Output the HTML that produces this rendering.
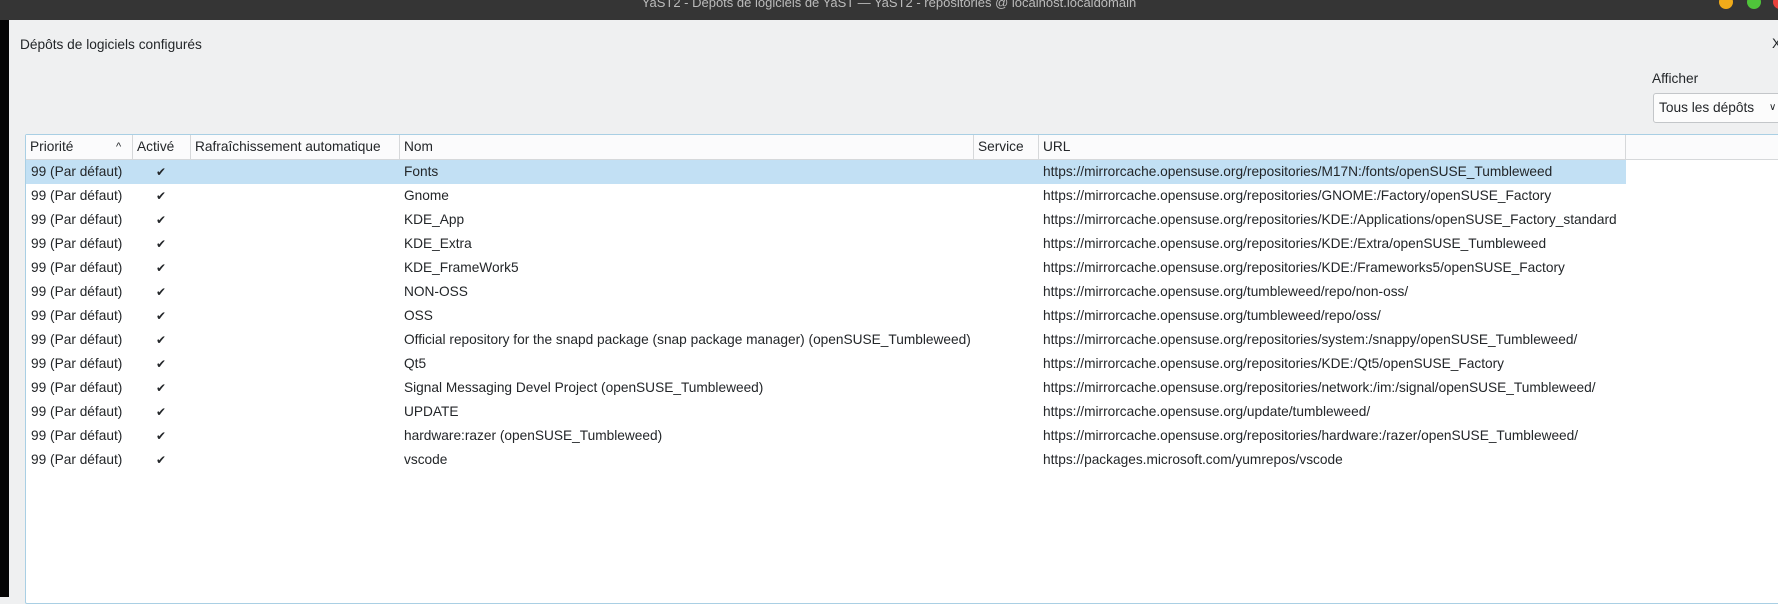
<!DOCTYPE html>
<html><head><meta charset="utf-8"><style>
*{margin:0;padding:0;box-sizing:border-box}
body{width:1778px;height:597px;overflow:hidden;background:#eff0f1;font-family:"Liberation Sans","DejaVu Sans",sans-serif;font-size:13.7px;color:#232629;position:relative}
.tb{position:absolute;left:0;top:0;width:1778px;height:20px;background:#353535;color:#bbb;font-size:13px;text-align:center;line-height:6px;overflow:hidden}
.dot{position:absolute;top:-5px;width:14px;height:14px;border-radius:50%}
.lstrip{position:absolute;left:0;top:20px;width:9px;height:577px;background:#050505}
.abs{position:absolute;white-space:nowrap}
.tbl{position:absolute;left:25px;top:134px;width:1760px;height:470px;background:#fff;border:1px solid #a9cfe4;border-radius:2px}
.hd{position:absolute;top:0;height:25px;line-height:24px;background:#fbfbfc;border-right:1px solid #d6d8da;border-bottom:1px solid #d6d8da;padding-left:4px}
.row{position:absolute;left:0;height:24px;line-height:24px;width:1600px}
.row span{position:absolute}
.sel{background:#c2e0f4}
</style></head><body>
<div class="tb">YaST2 - Dépôts de logiciels de YaST — YaST2 - repositories @ localhost.localdomain
<div class="dot" style="left:1719px;background:#f0ab1a"></div>
<div class="dot" style="left:1747px;background:#4fc43a"></div>
<div class="dot" style="left:1773px;background:#e8413b"></div>
</div>
<div class="lstrip"></div>
<div class="abs" style="left:20px;top:37px">Dépôts de logiciels configurés</div>
<div class="abs" style="left:1772px;top:36px">X</div>
<div class="abs" style="left:1652px;top:71px">Afficher</div>
<div class="abs" style="left:1653px;top:93px;width:130px;height:30px;background:#fcfcfc;border:1px solid #c3c6c9;border-radius:3px;padding-left:5px;line-height:28px">Tous les dépôts <span style="position:absolute;left:115px;top:0;font-size:10px">&#8744;</span></div>
<div class="tbl">
<div class="hd" style="left:0;width:107px">Priorité<span style="position:absolute;left:90px;font-size:11px">^</span></div>
<div class="hd" style="left:107px;width:58px">Activé</div>
<div class="hd" style="left:165px;width:209px">Rafraîchissement automatique</div>
<div class="hd" style="left:374px;width:574px">Nom</div>
<div class="hd" style="left:948px;width:65px">Service</div>
<div class="hd" style="left:1013px;width:587px">URL</div>
<div class="hd" style="left:1600px;width:160px;border-right:none"></div>
<div id="rows"></div>
</div>
<script>
var d=[["Fonts","https://mirrorcache.opensuse.org/repositories/M17N:/fonts/openSUSE_Tumbleweed"],
["Gnome","https://mirrorcache.opensuse.org/repositories/GNOME:/Factory/openSUSE_Factory"],
["KDE_App","https://mirrorcache.opensuse.org/repositories/KDE:/Applications/openSUSE_Factory_standard"],
["KDE_Extra","https://mirrorcache.opensuse.org/repositories/KDE:/Extra/openSUSE_Tumbleweed"],
["KDE_FrameWork5","https://mirrorcache.opensuse.org/repositories/KDE:/Frameworks5/openSUSE_Factory"],
["NON-OSS","https://mirrorcache.opensuse.org/tumbleweed/repo/non-oss/"],
["OSS","https://mirrorcache.opensuse.org/tumbleweed/repo/oss/"],
["Official repository for the snapd package (snap package manager) (openSUSE_Tumbleweed)","https://mirrorcache.opensuse.org/repositories/system:/snappy/openSUSE_Tumbleweed/"],
["Qt5","https://mirrorcache.opensuse.org/repositories/KDE:/Qt5/openSUSE_Factory"],
["Signal Messaging Devel Project (openSUSE_Tumbleweed)","https://mirrorcache.opensuse.org/repositories/network:/im:/signal/openSUSE_Tumbleweed/"],
["UPDATE","https://mirrorcache.opensuse.org/update/tumbleweed/"],
["hardware:razer (openSUSE_Tumbleweed)","https://mirrorcache.opensuse.org/repositories/hardware:/razer/openSUSE_Tumbleweed/"],
["vscode","https://packages.microsoft.com/yumrepos/vscode"]];
var h="";
d.forEach(function(r,i){h+='<div class="row'+(i==0?' sel':'')+'" style="top:'+(25+i*24)+'px"><span style="left:5px">99 (Par défaut)</span><span style="left:130px;font-size:12px;font-weight:bold">✔</span><span style="left:378px">'+r[0]+'</span><span style="left:1017px">'+r[1]+'</span></div>';});
document.getElementById("rows").outerHTML=h;
</script>
</body></html>
